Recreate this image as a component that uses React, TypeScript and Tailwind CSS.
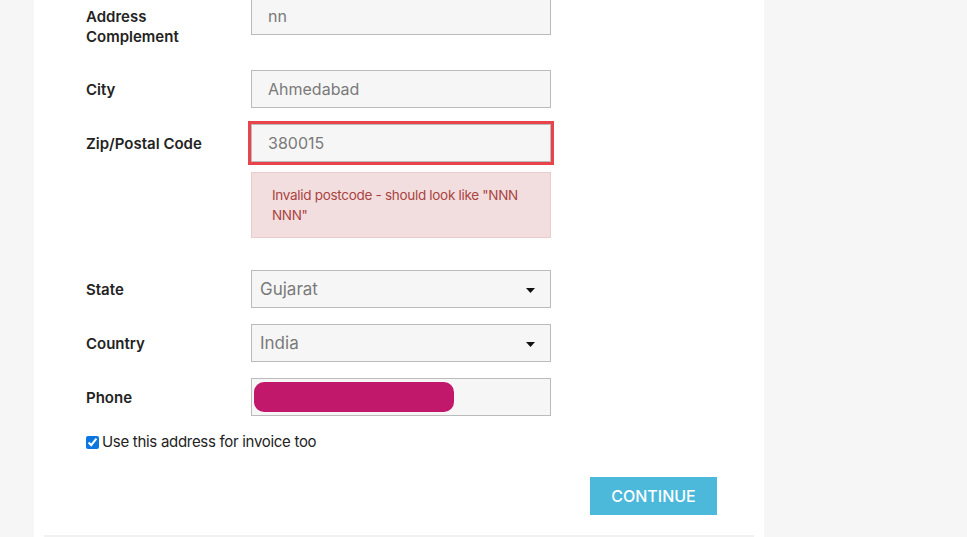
import React from 'react';

const font = { fontFamily: 'Inter, "Noto Sans", sans-serif' };

function Caret() {
  return (
    <svg width="9" height="5" viewBox="0 0 9 5" className="absolute right-[15px] top-[17px]">
      <path d="M0 0h9L4.5 5z" fill="#111" />
    </svg>
  );
}

function Row({ label, children, className = '' }: { label: React.ReactNode; children: React.ReactNode; className?: string }) {
  return (
    <div className={`flex items-start ${className}`}>
      <div className="w-[165px] pt-[10px] text-[15px] leading-5 font-semibold text-[#232323]">{label}</div>
      <div className="w-[300px]">{children}</div>
    </div>
  );
}

function TextField({ value, invalid = false }: { value: string; invalid?: boolean }) {
  return (
    <div
      className={`h-[38px] border border-[#bbbbbb] bg-[#f6f6f6] pl-4 flex items-center text-base text-[#7a7a7a] ${
        invalid ? 'outline-[3px] outline-solid outline-[#e9434c]' : ''
      }`}
    >
      {value}
    </div>
  );
}

function SelectField({ value }: { value: string }) {
  return (
    <div className="relative h-[38px] border border-[#bbbbbb] bg-[#f6f6f6] pl-2 pt-px flex items-center text-[17px] text-[#7a7a7a]">
      {value}
      <Caret />
    </div>
  );
}

export default function App() {
  return (
    <div className="h-[537px] overflow-hidden bg-[#f6f6f6]" style={font}>
      <div className="ml-[34px] w-[730px] h-full bg-white flex flex-col">
        <div className="pl-[52px] pr-[47px] -mt-[3px]">
          <Row label={<>Address<br />Complement</>} className="mb-[23px]">
            <TextField value="nn" />
          </Row>
          <Row label="City" className="mb-4">
            <TextField value="Ahmedabad" />
          </Row>
          <Row label="Zip/Postal Code" className="mb-[32px]">
            <TextField value="380015" invalid />
            <div className="mt-[10px] h-[66px] border border-[#ebcccc] bg-[#f2dede] pl-5 pr-4 pt-[12px] text-[13.5px] leading-5 text-[#a94442] tracking-[-0.3px]">
              Invalid postcode - should look like "NNN NNN"
            </div>
          </Row>
          <Row label="State" className="mb-4">
            <SelectField value="Gujarat" />
          </Row>
          <Row label="Country" className="mb-4">
            <SelectField value="India" />
          </Row>
          <Row label="Phone">
            <div className="h-[38px] border border-[#bbbbbb] bg-[#f6f6f6] pl-[2px] pt-[3px]">
              <div className="w-[200px] h-[30px] rounded-[10px] bg-[#c2186b]" />
            </div>
          </Row>
          <label className="mt-4 flex items-center h-5 text-[15px] text-[#232323] tracking-[-0.3px]">
            <input type="checkbox" defaultChecked className="w-[13px] h-[13px] m-0 mr-[3px] accent-[#0b76e0]" />
            Use this address for invoice too
          </label>
          <div className="mt-[25px] flex justify-end">
            <button className="w-[127px] h-[38px] bg-[#4cb9db] text-white text-base font-medium">CONTINUE</button>
          </div>
        </div>
        <div className="mt-[20px] mx-[10px] h-[2px] bg-[#f1f1f1]" />
      </div>
    </div>
  );
}
